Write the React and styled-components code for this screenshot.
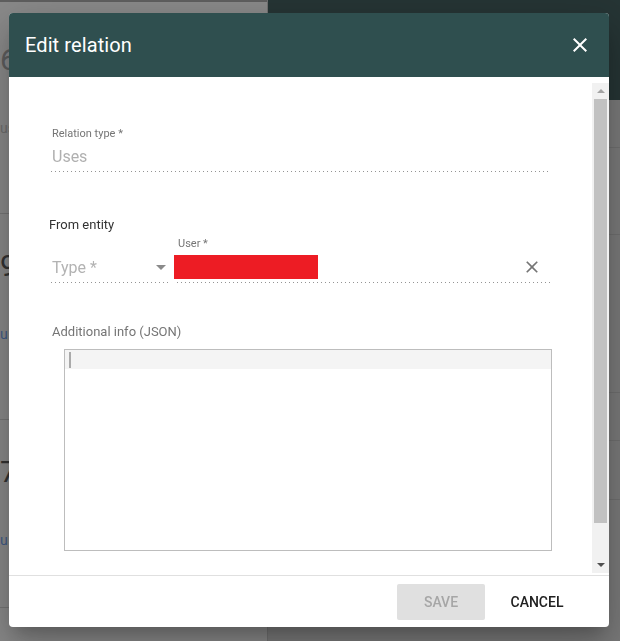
import React from "react";
import styled, { createGlobalStyle } from "styled-components";

const GlobalStyle = createGlobalStyle`
  html, body {
    margin: 0;
    padding: 0;
    height: 100%;
    overflow: hidden;
  }
  body {
    font-family: Roboto, "Noto Sans", sans-serif;
    background: #7b7b7b;
  }
`;

const sideCards = [
  { h: 206, big: "6", small: "us", bigColor: "#5e5e5e", smallColor: "#6e6e6e" },
  { h: 206, big: "9", small: "u", bigColor: "#333", smallColor: "#3f5a86" },
  { h: 188, big: "7", small: "u", bigColor: "#333", smallColor: "#3f5a86" },
];

const rightRows = [47, 86, 157, 47, 58];

const CloseIcon = ({ size = 24, color = "#fff" }) => (
  <svg width={size} height={size} viewBox="0 0 24 24" fill={color}>
    <path d="M19 6.41L17.59 5 12 10.59 6.41 5 5 6.41 10.59 12 5 17.59 6.41 19 12 13.41 17.59 19 19 17.59 13.41 12z" />
  </svg>
);

const App = () => {
  return (
    <>
      <GlobalStyle />
      <Backdrop>
        <SidePanel>
          {sideCards.map((card, i) => (
            <SideCard key={i} h={card.h}>
              <BigDigit color={card.bigColor}>{card.big}</BigDigit>
              <SmallText color={card.smallColor}>{card.small}</SmallText>
            </SideCard>
          ))}
        </SidePanel>
        <MainPanel>
          <DarkBar />
          {rightRows.map((h, i) => (
            <MainRow key={i} h={h} />
          ))}
        </MainPanel>
      </Backdrop>

      <Dialog>
        <DialogHeader>
          <DialogTitle>Edit relation</DialogTitle>
          <IconButton aria-label="close">
            <CloseIcon size={24} color="#fff" />
          </IconButton>
        </DialogHeader>

        <DialogBody>
          <Content>
            <Field width={497}>
              <FloatLabel>Relation type *</FloatLabel>
              <FieldValue disabled>Uses</FieldValue>
              <DottedLine gap={4} />
            </Field>

            <SectionLabel>From entity</SectionLabel>

            <EntityRow>
              <Field width={120}>
                <SelectBox>
                  <Placeholder>Type *</Placeholder>
                  <Caret />
                </SelectBox>
                <DottedLine gap={3} />
              </Field>
              <Field width={373}>
                <FloatLabel>User *</FloatLabel>
                <AutocompleteBox>
                  <Redaction />
                  <ClearButton aria-label="clear">
                    <CloseIcon size={20} color="#757575" />
                  </ClearButton>
                </AutocompleteBox>
                <DottedLine gap={3} />
              </Field>
            </EntityRow>

            <JsonLabel>Additional info (JSON)</JsonLabel>
            <JsonEditor>
              <ActiveLine>
                <Cursor />
              </ActiveLine>
            </JsonEditor>
          </Content>

          <Scrollbar>
            <ScrollArrow up />
            <ScrollTrack>
              <ScrollThumb />
            </ScrollTrack>
            <ScrollArrow />
          </Scrollbar>
        </DialogBody>

        <DialogFooter>
          <FlatButton disabled>Save</FlatButton>
          <FlatButton>Cancel</FlatButton>
        </DialogFooter>
      </Dialog>
    </>
  );
};

/* page behind the modal (already dimmed) */

const Backdrop = styled.div`
  display: grid;
  grid-template-columns: 267px 1fr;
  height: 641px;
`;

const SidePanel = styled.div`
  display: flex;
  flex-direction: column;
  background: #8a8a8a;
  border-top: 2px solid #5f5f5f;
  padding-top: 6px;
`;

const SideCard = styled.div`
  height: ${(p) => p.h}px;
  border-bottom: 1px solid #767676;
  display: flex;
  flex-direction: column;
  padding: 34px 0 0 0;
  box-sizing: border-box;
`;

const BigDigit = styled.div`
  font-size: 30px;
  line-height: 36px;
  color: ${(p) => p.color};
`;

const SmallText = styled.div`
  font-size: 14px;
  line-height: 20px;
  margin-top: 40px;
  color: ${(p) => p.color};
`;

const MainPanel = styled.div`
  display: flex;
  flex-direction: column;
  background: #7b7b7b;
  border-left: 1px solid #727272;
`;

const DarkBar = styled.div`
  height: 100px;
  background: #263535;
`;

const MainRow = styled.div`
  height: ${(p) => p.h}px;
  border-bottom: 1px solid #707070;
`;

/* dialog */

const Dialog = styled.div`
  position: fixed;
  top: 13px;
  left: 9px;
  width: 600px;
  height: 614px;
  display: flex;
  flex-direction: column;
  background: #fff;
  border-radius: 4px;
  overflow: hidden;
  box-shadow: 0 11px 15px -7px rgba(0, 0, 0, 0.2),
    0 24px 38px 3px rgba(0, 0, 0, 0.14), 0 9px 46px 8px rgba(0, 0, 0, 0.12);
`;

const DialogHeader = styled.div`
  height: 64px;
  flex: none;
  display: flex;
  align-items: center;
  justify-content: space-between;
  padding: 0 17px 0 16px;
  background: #2f4f4f;
`;

const DialogTitle = styled.h2`
  margin: 0;
  font-size: 20px;
  font-weight: 400;
  color: #fff;
  letter-spacing: 0.005em;
`;

const IconButton = styled.button`
  width: 24px;
  height: 24px;
  padding: 0;
  border: 0;
  background: none;
  display: flex;
  cursor: pointer;
`;

const DialogBody = styled.div`
  flex: 1;
  display: flex;
  min-height: 0;
`;

const Content = styled.div`
  flex: 1;
  display: flex;
  flex-direction: column;
  padding: 50px 0 0 42px;
  overflow: hidden;
`;

const Field = styled.div`
  width: ${(p) => p.width}px;
  display: flex;
  flex-direction: column;
`;

const FloatLabel = styled.label`
  font-size: 11px;
  line-height: 14px;
  color: #757575;
  padding-left: 1px;
`;

const FieldValue = styled.div`
  margin-top: 6px;
  font-size: 16px;
  line-height: 20px;
  padding-left: 1px;
  color: ${(p) => (p.disabled ? "#b0b0b0" : "#212121")};
`;

const DottedLine = styled.div`
  height: 1px;
  margin-top: ${(p) => p.gap}px;
  background-image: linear-gradient(
    to right,
    rgba(0, 0, 0, 0.42) 0,
    rgba(0, 0, 0, 0.42) 33%,
    transparent 0
  );
  background-size: 4px 1px;
  background-repeat: repeat-x;
`;

const SectionLabel = styled.div`
  margin: 45px 0 0 -2px;
  font-size: 13px;
  line-height: 16px;
  color: #333;
`;

const EntityRow = styled.div`
  display: flex;
  align-items: flex-end;
  gap: 6px;
  margin-top: 4px;
`;

const SelectBox = styled.div`
  height: 24px;
  display: flex;
  align-items: center;
  justify-content: space-between;
  padding: 0 5px 0 1px;
`;

const Placeholder = styled.span`
  font-size: 16px;
  color: #b3b3b3;
`;

const Caret = styled.span`
  width: 0;
  height: 0;
  border-left: 5px solid transparent;
  border-right: 5px solid transparent;
  border-top: 5px solid #8a8a8a;
`;

const AutocompleteBox = styled.div`
  height: 24px;
  margin-top: 4px;
  display: flex;
  align-items: center;
  justify-content: space-between;
  padding-right: 8px;
`;

const Redaction = styled.div`
  width: 144px;
  height: 24px;
  margin-left: -3px;
  background: #ed1c24;
`;

const ClearButton = styled.button`
  width: 20px;
  height: 20px;
  padding: 0;
  border: 0;
  background: none;
  display: flex;
  cursor: pointer;
`;

const JsonLabel = styled.div`
  margin-top: 41px;
  font-size: 13px;
  line-height: 16px;
  color: #757575;
  padding-left: 1px;
`;

const JsonEditor = styled.div`
  margin: 9px 0 0 13px;
  width: 488px;
  height: 202px;
  box-sizing: border-box;
  border: 1px solid #bdbdbd;
  background: #fff;
`;

const ActiveLine = styled.div`
  height: 19px;
  background: #f4f4f4;
  display: flex;
  align-items: center;
  padding-left: 4px;
`;

const Cursor = styled.div`
  width: 2px;
  height: 16px;
  background: #aaa;
`;

const Scrollbar = styled.div`
  width: 17px;
  margin: 6px 0 2px;
  display: flex;
  flex-direction: column;
  background: #f1f1f1;
`;

const ScrollArrow = styled.div`
  height: 16px;
  flex: none;
  display: flex;
  align-items: center;
  justify-content: center;

  &::before {
    content: "";
    width: 0;
    height: 0;
    border-left: 4px solid transparent;
    border-right: 4px solid transparent;
    ${(p) =>
      p.up
        ? "border-bottom: 4px solid #a3a3a3;"
        : "border-top: 4px solid #505050;"}
  }
`;

const ScrollTrack = styled.div`
  flex: 1;
  display: flex;
  flex-direction: column;
  padding: 0 2px;
`;

const ScrollThumb = styled.div`
  height: 424px;
  background: #c1c1c1;
`;

const DialogFooter = styled.div`
  height: 52px;
  flex: none;
  box-sizing: border-box;
  border-top: 1px solid #e0e0e0;
  display: flex;
  align-items: center;
  justify-content: flex-end;
  gap: 8px;
  padding: 0 28px 0 0;
`;

const FlatButton = styled.button`
  width: 88px;
  height: 36px;
  border: 0;
  border-radius: 2px;
  font-family: Roboto, "Noto Sans", sans-serif;
  font-size: 14px;
  font-weight: 500;
  text-transform: uppercase;
  cursor: pointer;
  background: ${(p) => (p.disabled ? "#e0e0e0" : "transparent")};
  color: ${(p) => (p.disabled ? "#a6a6a6" : "#212121")};
`;

export default App;
